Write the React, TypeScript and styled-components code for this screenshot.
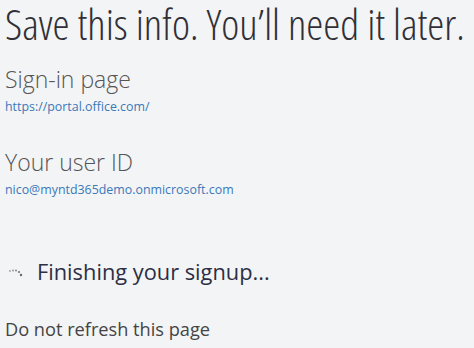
import React from 'react';
import styled, { createGlobalStyle } from 'styled-components';

const GlobalStyle = createGlobalStyle`
  html, body {
    margin: 0;
    padding: 0;
    background: #f3f4f6;
  }
  body {
    font-family: 'Open Sans', 'Noto Sans', sans-serif;
  }
`;

const Page = styled.div`
  width: 474px;
  min-height: 348px;
  box-sizing: border-box;
  padding: 0 0 0 5px;
  background: #f3f4f6;
`;

const Title = styled.h1`
  margin: 0;
  font-weight: 300;
  font-stretch: 76%;
  font-size: 43px;
  line-height: 48px;
  color: #303036;
  white-space: nowrap;
`;

const Section = styled.div<{ $top: number }>`
  margin-top: ${(p) => p.$top}px;
`;

const Label = styled.div`
  font-weight: 300;
  font-size: 23px;
  line-height: 30px;
  color: #555;
`;

const Value = styled.div`
  margin-top: 4px;
  font-size: 12.4px;
  line-height: 18px;
  color: #3a78b8;
`;

const Status = styled.div`
  display: flex;
  align-items: center;
  gap: 13px;
  margin-top: 59px;
  padding-left: 3px;
`;

const StatusText = styled.span`
  font-size: 21.8px;
  line-height: 28px;
  color: #2c2f45;
`;

const Hint = styled.div`
  margin-top: 30px;
  font-size: 18.2px;
  line-height: 26px;
  color: #444;
`;

function Spinner() {
  return (
    <svg width="16" height="10" viewBox="0 0 16 10">
      <circle cx="2" cy="4" r="1" fill="#aaa" />
      <circle cx="5" cy="3.5" r="1" fill="#999" />
      <circle cx="8" cy="3.5" r="1" fill="#888" />
      <circle cx="11" cy="5" r="1.1" fill="#777" />
      <circle cx="13" cy="8" r="1.2" fill="#666" />
    </svg>
  );
}

export default function App() {
  return (
    <>
      <GlobalStyle />
      <Page>
        <Title>Save this info. You’ll need it later.</Title>
        <Section $top={16}>
          <Label>Sign-in page</Label>
          <Value>https://portal.office.com/</Value>
        </Section>
        <Section $top={31}>
          <Label>Your user ID</Label>
          <Value>nico@myntd365demo.onmicrosoft.com</Value>
        </Section>
        <Status>
          <Spinner />
          <StatusText>Finishing your signup...</StatusText>
        </Status>
        <Hint>Do not refresh this page</Hint>
      </Page>
    </>
  );
}
